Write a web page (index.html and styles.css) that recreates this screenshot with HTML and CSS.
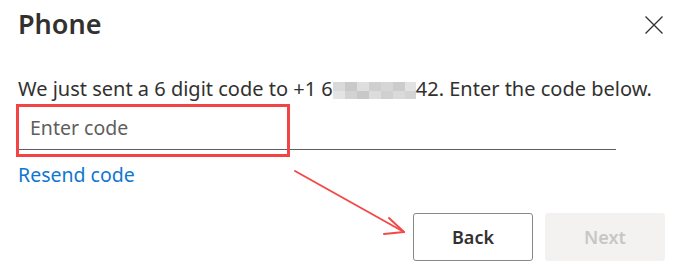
FILE: index.html
```html
<!DOCTYPE html>
<html>
<head>
<meta charset="utf-8">
<link rel="stylesheet" href="styles.css">
</head>
<body>
<div class="dialog">
  <div class="head">
    <h1 class="title">Phone</h1>
    <button class="close" aria-label="Close">
      <svg width="18" height="18" viewBox="0 0 18 18"><path d="M0.5 0.5L17.5 17.5M17.5 0.5L0.5 17.5" stroke="#323130" stroke-width="1.3" fill="none"/></svg>
    </button>
  </div>
  <p class="msg">We just sent a 6 digit code to +1 6<span class="redact"></span>42. Enter the code below.</p>
  <div class="field">
    <input class="code" type="text" placeholder="Enter code">
    <span class="mark"></span>
  </div>
  <a class="resend" href="#">Resend code</a>
  <div class="actions">
    <button class="btn back">Back</button>
    <button class="btn next" disabled>Next</button>
  </div>
  <svg class="arrow" width="130" height="80" viewBox="0 0 130 80">
    <path d="M2 3L111 64" stroke="#f24a4a" stroke-width="2" fill="none" stroke-linecap="round"/>
    <path d="M96 50L111 64L91 66" stroke="#f24a4a" stroke-width="2" fill="none" stroke-linecap="round" stroke-linejoin="round"/>
  </svg>
</div>
</body>
</html>
```
FILE: styles.css
```css
html, body {
  margin: 0;
  padding: 0;
  background: #fff;
}
.dialog {
  position: relative;
  width: 683px;
  height: 275px;
  box-sizing: border-box;
  padding: 6px 18px 0 18px;
  font-family: "Noto Sans", "Open Sans", sans-serif;
  color: #323130;
}
.head {
  display: flex;
  justify-content: space-between;
  align-items: flex-start;
}
.title {
  margin: 0;
  font-size: 27px;
  font-weight: 600;
  line-height: 36px;
  color: #323130;
}
.close {
  border: 0;
  background: none;
  padding: 0;
  margin: 10px 2px 0 0;
  width: 18px;
  height: 18px;
  display: flex;
}
.msg {
  margin: 35px 0 0 0;
  font-size: 20px;
  line-height: 24px;
  color: #323130;
  white-space: nowrap;
}
.redact {
  display: inline-block;
  width: 83px;
  height: 17px;
  vertical-align: -3px;
  background:
    linear-gradient(90deg, #d9d9d9 0 12px, #c9c9c9 12px 24px, #dedede 24px 36px, #cfcfcf 36px 48px, #d6d6d6 48px 60px, #cccccc 60px 72px, #e2e2e2 72px 83px) top / 100% 9px no-repeat,
    linear-gradient(90deg, #e4e4e4 0 12px, #d2d2d2 12px 24px, #c8c8c8 24px 36px, #dcdcdc 36px 48px, #d0d0d0 48px 60px, #dadada 60px 72px, #d4d4d4 72px 83px) bottom / 100% 8px no-repeat;
}
.field {
  position: relative;
  width: 598px;
  margin-top: 12px;
}
.code {
  display: block;
  width: 100%;
  box-sizing: border-box;
  border: 0;
  border-bottom: 1px solid #605e5c;
  outline: none;
  padding: 3px 12px 9px 12px;
  font-family: inherit;
  font-size: 19.5px;
  line-height: 24px;
  color: #323130;
  background: transparent;
}
.code::placeholder {
  color: #605e5c;
}
.mark {
  position: absolute;
  left: -2px;
  top: -9px;
  width: 268px;
  height: 47px;
  border: 3px solid #f24444;
}
.resend {
  display: inline-block;
  margin-top: 13px;
  font-size: 19.5px;
  line-height: 24px;
  color: #0f76d1;
  text-decoration: none;
}
.actions {
  display: flex;
  justify-content: flex-end;
  gap: 12px;
  margin-top: 26px;
  padding-right: 0;
}
.btn {
  width: 120px;
  height: 48px;
  border-radius: 3px;
  font-family: inherit;
  font-size: 18px;
  font-weight: 600;
  padding: 0;
}
.back {
  background: #fff;
  border: 1px solid #8a8886;
  color: #323130;
}
.next {
  background: #f3f2f1;
  border: 1px solid #f3f2f1;
  color: #c8c6c4;
}
.arrow {
  position: absolute;
  left: 293px;
  top: 168px;
}
```
